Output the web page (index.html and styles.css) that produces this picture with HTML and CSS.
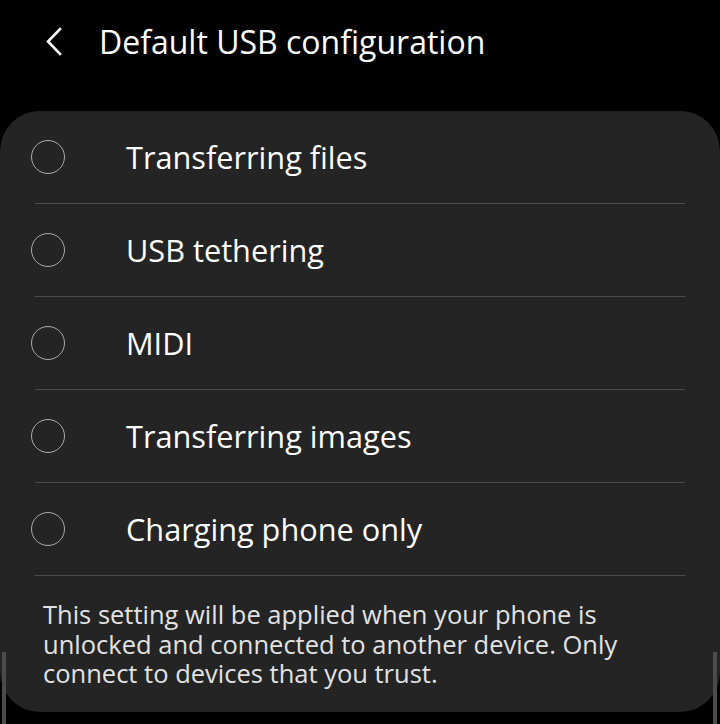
FILE: index.html
```html
<!DOCTYPE html>
<html lang="en">
<head>
    <meta charset="UTF-8">
    <meta name="viewport" content="width=device-width, initial-scale=1.0">
    <title>Default USB configuration</title>
    <link rel="stylesheet" href="styles.css">
</head>
<body>
    <div class="header">
        <span class="back-btn">
            <svg width="24" height="32" viewBox="0 0 24 32">
                <path d="M17 4 L5 16.5 L17 29" fill="none" stroke="#fff" stroke-width="2.6" stroke-linecap="square"/>
            </svg>
        </span>
        <h1>Default USB configuration</h1>
    </div>

    <div class="card">
        <div class="option">
            <span class="radio"></span>
            <span class="option-label">Transferring files</span>
        </div>
        <div class="option">
            <span class="radio"></span>
            <span class="option-label">USB tethering</span>
        </div>
        <div class="option">
            <span class="radio"></span>
            <span class="option-label">MIDI</span>
        </div>
        <div class="option">
            <span class="radio"></span>
            <span class="option-label">Transferring images</span>
        </div>
        <div class="option">
            <span class="radio"></span>
            <span class="option-label">Charging phone only</span>
        </div>
        <p class="note">This setting will be applied when your phone is unlocked and connected to another device. Only connect to devices that you trust.</p>
    </div>

    <!-- bord écran -->
    <span class="edge edge-left"></span>
    <span class="edge edge-right"></span>
</body>
</html>
```

FILE: styles.css
```css
body {
    font-family: "Open Sans", "Noto Sans", sans-serif;
    background-color: #000;
    color: #fff;
    margin: 0;
    padding: 0;
    width: 720px;
    height: 724px;
    overflow: hidden;
    position: relative;
}

.header {
    display: flex;
    align-items: center;
    height: 82px;
    padding-left: 43px;
}

.back-btn {
    display: flex;
    width: 56px;
}

h1 {
    margin: 0;
    font-size: 32px;
    font-weight: 400;
}

.card {
    margin-top: 29px;
    background-color: #232423;
    border-radius: 40px;
    height: 601px;
    box-sizing: border-box;
}

.option {
    display: flex;
    align-items: center;
    height: 92px;
    margin: 0 35px;
    border-bottom: 1px solid #4a4b4a;
}

.radio {
    width: 32px;
    height: 32px;
    border: 1.5px solid #a9aaa9;
    border-radius: 50%;
    margin-left: -4px;
    flex-shrink: 0;
}

.option-label {
    margin-left: 61px;
    font-size: 30.7px;
}

.note {
    margin: 0;
    padding: 24px 70px 0 43px;
    font-size: 25.5px;
    line-height: 29.5px;
    color: #e2e2e2;
}

.edge {
    position: absolute;
    bottom: 0;
    width: 4px;
    height: 72px;
    background-color: #4b4b4b;
}

.edge-left {
    left: 2px;
}

.edge-right {
    right: 3px;
}
```
